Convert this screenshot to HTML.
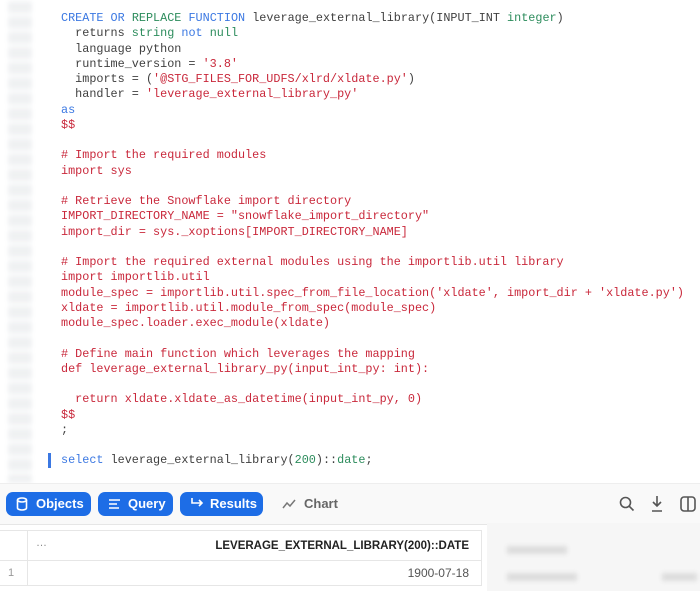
<!DOCTYPE html><html><head><style>
body{margin:0;width:700px;height:591px;overflow:hidden;background:#fff;font-family:"Liberation Sans",sans-serif;position:relative}
.gut{position:absolute;left:8px;top:0;width:24px;height:483px;background:repeating-linear-gradient(#fff 0,#eceef0 3px,#eceef0 11px,#fff 15.25px);opacity:.8;filter:blur(2px)}
pre{position:absolute;left:61px;top:11px;margin:0;font-family:"Liberation Mono",monospace;font-size:11.8px;line-height:15.25px;color:#3f3f3f}
.b{color:#3b78e2}.g{color:#2c8c5c}.r{color:#c9283b}
.cur{position:absolute;left:48px;top:453px;width:3px;height:15px;background:#3b78e2}
.tb{position:absolute;top:483px;left:0;width:700px;height:40px;background:#f9f9f9;border-top:1px solid #eee;border-bottom:1px solid #e6e6e6}
.btn{position:absolute;top:8px;height:24px;background:#1d6de6;color:#fff;border-radius:7px;font-size:13px;font-weight:bold;line-height:24px;box-sizing:border-box;padding-left:30px}
.btn svg{position:absolute;left:10px;top:5px}
.chart{position:absolute;left:282px;top:8px;line-height:24px;font-size:13px;color:#666;font-weight:bold}
.tbl{position:absolute;left:0;top:530px;width:481px;height:54px;border:1px solid #e6e6e6;border-left:none}
.rp{position:absolute;left:487px;top:523px;width:213px;height:68px;background:#f6f6f6}
.blur{position:absolute;background:#ddd;filter:blur(2px);height:8px}
</style></head><body>
<div class="gut"></div>
<pre><span class="b">CREATE OR</span> <span class="g">REPLACE</span> <span class="b">FUNCTION</span> leverage_external_library(INPUT_INT <span class="g">integer</span>)
  returns <span class="g">string</span> <span class="b">not</span> <span class="g">null</span>
  language python
  runtime_version = <span class="r">'3.8'</span>
  imports = (<span class="r">'@STG_FILES_FOR_UDFS/xlrd/xldate.py'</span>)
  handler = <span class="r">'leverage_external_library_py'</span>
<span class="b">as</span>
<span class="r">$$</span>
<span class="r">
# Import the required modules
import sys

# Retrieve the Snowflake import directory
IMPORT_DIRECTORY_NAME = "snowflake_import_directory"
import_dir = sys._xoptions[IMPORT_DIRECTORY_NAME]

# Import the required external modules using the importlib.util library
import importlib.util
module_spec = importlib.util.spec_from_file_location('xldate', import_dir + 'xldate.py')
xldate = importlib.util.module_from_spec(module_spec)
module_spec.loader.exec_module(xldate)

# Define main function which leverages the mapping
def leverage_external_library_py(input_int_py: int):

  return xldate.xldate_as_datetime(input_int_py, 0)
$$</span>
;

<span class="b">select</span> leverage_external_library(<span class="g">200</span>)::<span class="g">date</span>;</pre>
<div class="cur"></div>
<div class="tb">
<div class="btn" style="left:6px;width:85px"><svg width="12" height="14" viewBox="0 0 12 14" fill="none" stroke="#fff" stroke-width="1.6"><ellipse cx="6" cy="3" rx="4.5" ry="2"/><path d="M1.5 3v8c0 1.1 2 2 4.5 2s4.5-.9 4.5-2V3"/></svg>Objects</div>
<div class="btn" style="left:98px;width:75px"><svg width="13" height="14" viewBox="0 0 13 14" stroke="#fff" stroke-width="1.6"><path d="M1 3h11M1 7h8M1 11h10"/></svg>Query</div>
<div class="btn" style="left:180px;width:83px"><svg width="14" height="14" viewBox="0 0 14 14" fill="none" stroke="#fff" stroke-width="1.6"><path d="M2 1v5h10M9 3l3 3-3 3"/></svg>Results</div>
<div class="chart"><svg width="14" height="10" viewBox="0 0 14 10" fill="none" stroke="#777" stroke-width="1.5" style="vertical-align:-1px;margin-right:8px"><path d="M1 9l4-5 3 3 5-6"/></svg>Chart</div>
<svg style="position:absolute;left:619px;top:12px" width="16" height="16" viewBox="0 0 16 16" fill="none" stroke="#555" stroke-width="1.6"><circle cx="6.5" cy="6.5" r="5"/><path d="M10 10l4.5 4.5"/></svg>
<svg style="position:absolute;left:650px;top:11px" width="14" height="18" viewBox="0 0 14 18" fill="none" stroke="#555" stroke-width="1.6"><path d="M7 1v10M3 7l4 4 4-4M2 16h10"/></svg>
<svg style="position:absolute;left:680px;top:12px" width="16" height="16" viewBox="0 0 16 16" fill="none" stroke="#555" stroke-width="1.6"><rect x="1" y="1" width="14" height="14" rx="3"/><path d="M8 1v14"/></svg>
</div>
<div class="tbl">
<div style="position:absolute;left:27px;top:0;width:1px;height:54px;background:#e6e6e6"></div>
<div style="position:absolute;left:0;top:29px;width:481px;height:1px;background:#e6e6e6"></div>
<div style="position:absolute;left:36px;top:6px;font-size:11px;color:#888">…</div>
<div style="position:absolute;right:12px;top:9px;font-size:11.5px;font-weight:bold;color:#222">LEVERAGE_EXTERNAL_LIBRARY(200)::DATE</div>
<div style="position:absolute;left:8px;top:36px;font-size:11px;color:#999">1</div>
<div style="position:absolute;right:12px;top:35px;font-size:12px;color:#555">1900-07-18</div>
</div>
<div class="rp"><div class="blur" style="left:20px;top:23px;width:60px"></div><div class="blur" style="left:20px;top:50px;width:70px"></div><div class="blur" style="left:175px;top:50px;width:35px"></div></div>
</body></html>
